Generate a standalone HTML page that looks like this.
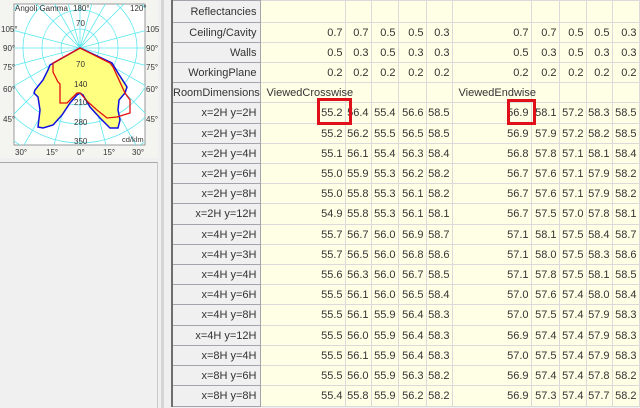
<!DOCTYPE html>
<html><head><meta charset="utf-8"><style>
*{margin:0;padding:0;box-sizing:border-box}
body{width:640px;height:408px;background:#f0f0f0;position:relative;overflow:hidden;font-family:"Liberation Sans",sans-serif}
#chart{position:absolute;left:0;top:0}
.sep{position:absolute;left:161px;top:0;width:3px;height:408px;background:#d6d6d6}
.lowbox{position:absolute;left:0;top:162px;width:158px;height:246px;border-top:1px solid #a8a8a8;border-right:1px solid #c8c8c8}
table{position:absolute;left:171px;top:0;width:467px;border-collapse:collapse;table-layout:fixed;border-left:2px solid #6e6e6e;font-size:11px;color:#333}
td{border:1px solid #dadada;background:#ffffe6;text-align:right;padding:0 2px 0 0;height:20px;white-space:nowrap;overflow:hidden;line-height:14px}
td.l{background:#f0f0f0;border:1px solid #a4a4ac;border-left:none;padding-right:3px}
td.h{text-align:left;padding-left:6px;overflow:visible}
.r{position:absolute;border:3px solid #e0101a}
</style></head><body>
<svg id="chart" width="160" height="160" viewBox="0 0 160 160" font-family="Liberation Sans,sans-serif" font-size="8" fill="#333">
<rect x="0" y="0" width="158" height="158" fill="#f4f4f0"/>
<defs><clipPath id="c"><rect x="14" y="4" width="131" height="141"/></clipPath></defs>
<rect x="14" y="4" width="131" height="141" fill="#fff" stroke="#999"/>
<g clip-path="url(#c)" stroke="#5fe8f0" stroke-width="0.8" fill="none">
<circle cx="80" cy="48" r="19"/><circle cx="80" cy="48" r="38"/><circle cx="80" cy="48" r="57"/><circle cx="80" cy="48" r="76"/><circle cx="80" cy="48" r="95"/><circle cx="80" cy="48" r="114"/>
<path d="M80 48L80 160M80 48L80 -60M80 48L110 160M80 48L50 160M80 48L136 145M80 48L24 145M80 48L177 145M80 48L-17 145M80 48L200 117M80 48L-40 117M80 48L200 80M80 48L-40 80M80 48L200 48M80 48L-40 48M80 48L200 16M80 48L-40 16M80 48L177 -49M80 48L-17 -49M80 48L136 -49M80 48L24 -49M80 48L110 -64M80 48L50 -64"/>
</g>
<path d="M80 48L50 65L48 70L43 80L35 90L34 93L38 97L40 110L38 127L43 128L53 125L62 115L70 103L77 95L80 93L83 95L90 107L100 118L110 128L118 128L120 120L118 110L119 100L125 93L127 87L118 73L112 63Z" fill="#ffff80" stroke="#1010e0" stroke-width="1.5"/>
<path d="M80 48L53 63L53 72L58 82L60 84L60 103L67 103L72 98L77 93L80 93L88 102L97 110L107 118L117 117L130 113L130 100L125 93L113 67L110 63Z" fill="none" stroke="#e01010" stroke-width="1.3"/>
<text x="15" y="11">Angoli Gamma</text><text x="73" y="11">180°</text><text x="130" y="11">120°</text>
<text x="76" y="26">70</text><text x="76" y="67">70</text><text x="74" y="87">140</text><text x="74" y="105">210</text><text x="74" y="125">280</text><text x="74" y="144">350</text>
<text x="1" y="32">105°</text><text x="3" y="51">90°</text><text x="3" y="70">75°</text><text x="3" y="92">60°</text><text x="3" y="122">45°</text>
<text x="146" y="32">105°</text><text x="146" y="51">90°</text><text x="146" y="70">75°</text><text x="146" y="92">60°</text><text x="146" y="122">45°</text>
<text x="122" y="142" font-size="7.5">cd/klm</text>
<text x="15" y="155">30°</text><text x="46" y="155">15°</text><text x="77" y="155">0°</text><text x="103" y="155">15°</text><text x="132" y="155">30°</text>
</svg>
<div class="sep"></div><div class="lowbox"></div>
<table>
<colgroup><col style="width:88px"><col style="width:85px"><col style="width:26px"><col style="width:27px"><col style="width:28px"><col style="width:26px"><col style="width:79px"><col style="width:28px"><col style="width:27px"><col style="width:26px"><col style="width:27px"></colgroup>
<tr style="height:22px"><td class="l">Reflectancies</td><td></td><td></td><td></td><td></td><td></td><td></td><td></td><td></td><td></td><td></td></tr>
<tr><td class="l">Ceiling/Cavity</td><td>0.7</td><td>0.7</td><td>0.5</td><td>0.5</td><td>0.3</td><td>0.7</td><td>0.7</td><td>0.5</td><td>0.5</td><td>0.3</td></tr>
<tr><td class="l">Walls</td><td>0.5</td><td>0.3</td><td>0.5</td><td>0.3</td><td>0.3</td><td>0.5</td><td>0.3</td><td>0.5</td><td>0.3</td><td>0.3</td></tr>
<tr><td class="l">WorkingPlane</td><td>0.2</td><td>0.2</td><td>0.2</td><td>0.2</td><td>0.2</td><td>0.2</td><td>0.2</td><td>0.2</td><td>0.2</td><td>0.2</td></tr>
<tr><td class="l">RoomDimensions</td><td class="h">ViewedCrosswise</td><td></td><td></td><td></td><td></td><td class="h">ViewedEndwise</td><td></td><td></td><td></td><td></td></tr>
<tr style="height:21px"><td class="l">x=2H y=2H</td><td>55.2</td><td>56.4</td><td>55.4</td><td>56.6</td><td>58.5</td><td>56.9</td><td>58.1</td><td>57.2</td><td>58.3</td><td>58.5</td></tr>
<tr><td class="l">x=2H y=3H</td><td>55.2</td><td>56.2</td><td>55.5</td><td>56.5</td><td>58.5</td><td>56.9</td><td>57.9</td><td>57.2</td><td>58.2</td><td>58.5</td></tr>
<tr><td class="l">x=2H y=4H</td><td>55.1</td><td>56.1</td><td>55.4</td><td>56.3</td><td>58.4</td><td>56.8</td><td>57.8</td><td>57.1</td><td>58.1</td><td>58.4</td></tr>
<tr><td class="l">x=2H y=6H</td><td>55.0</td><td>55.9</td><td>55.3</td><td>56.2</td><td>58.2</td><td>56.7</td><td>57.6</td><td>57.1</td><td>57.9</td><td>58.2</td></tr>
<tr><td class="l">x=2H y=8H</td><td>55.0</td><td>55.8</td><td>55.3</td><td>56.1</td><td>58.2</td><td>56.7</td><td>57.6</td><td>57.1</td><td>57.9</td><td>58.2</td></tr>
<tr style="height:21px"><td class="l">x=2H y=12H</td><td>54.9</td><td>55.8</td><td>55.3</td><td>56.1</td><td>58.1</td><td>56.7</td><td>57.5</td><td>57.0</td><td>57.8</td><td>58.1</td></tr>
<tr><td class="l">x=4H y=2H</td><td>55.7</td><td>56.7</td><td>56.0</td><td>56.9</td><td>58.7</td><td>57.1</td><td>58.1</td><td>57.5</td><td>58.4</td><td>58.7</td></tr>
<tr><td class="l">x=4H y=3H</td><td>55.7</td><td>56.5</td><td>56.0</td><td>56.8</td><td>58.6</td><td>57.1</td><td>58.0</td><td>57.5</td><td>58.3</td><td>58.6</td></tr>
<tr><td class="l">x=4H y=4H</td><td>55.6</td><td>56.3</td><td>56.0</td><td>56.7</td><td>58.5</td><td>57.1</td><td>57.8</td><td>57.5</td><td>58.1</td><td>58.5</td></tr>
<tr><td class="l">x=4H y=6H</td><td>55.5</td><td>56.1</td><td>56.0</td><td>56.5</td><td>58.4</td><td>57.0</td><td>57.6</td><td>57.4</td><td>58.0</td><td>58.4</td></tr>
<tr style="height:21px"><td class="l">x=4H y=8H</td><td>55.5</td><td>56.1</td><td>55.9</td><td>56.4</td><td>58.3</td><td>57.0</td><td>57.5</td><td>57.4</td><td>57.9</td><td>58.3</td></tr>
<tr><td class="l">x=4H y=12H</td><td>55.5</td><td>56.0</td><td>55.9</td><td>56.4</td><td>58.3</td><td>56.9</td><td>57.4</td><td>57.4</td><td>57.9</td><td>58.3</td></tr>
<tr><td class="l">x=8H y=4H</td><td>55.5</td><td>56.1</td><td>55.9</td><td>56.4</td><td>58.3</td><td>57.0</td><td>57.5</td><td>57.4</td><td>57.9</td><td>58.3</td></tr>
<tr><td class="l">x=8H y=6H</td><td>55.5</td><td>56.0</td><td>55.9</td><td>56.3</td><td>58.2</td><td>56.9</td><td>57.4</td><td>57.4</td><td>57.8</td><td>58.2</td></tr>
<tr style="height:21px"><td class="l">x=8H y=8H</td><td>55.4</td><td>55.8</td><td>55.9</td><td>56.2</td><td>58.2</td><td>56.9</td><td>57.3</td><td>57.4</td><td>57.7</td><td>58.2</td></tr>
</table>
<div class="r" style="left:317px;top:98px;width:35px;height:27px"></div>
<div class="r" style="left:507px;top:99px;width:29px;height:26px"></div>
</body></html>
